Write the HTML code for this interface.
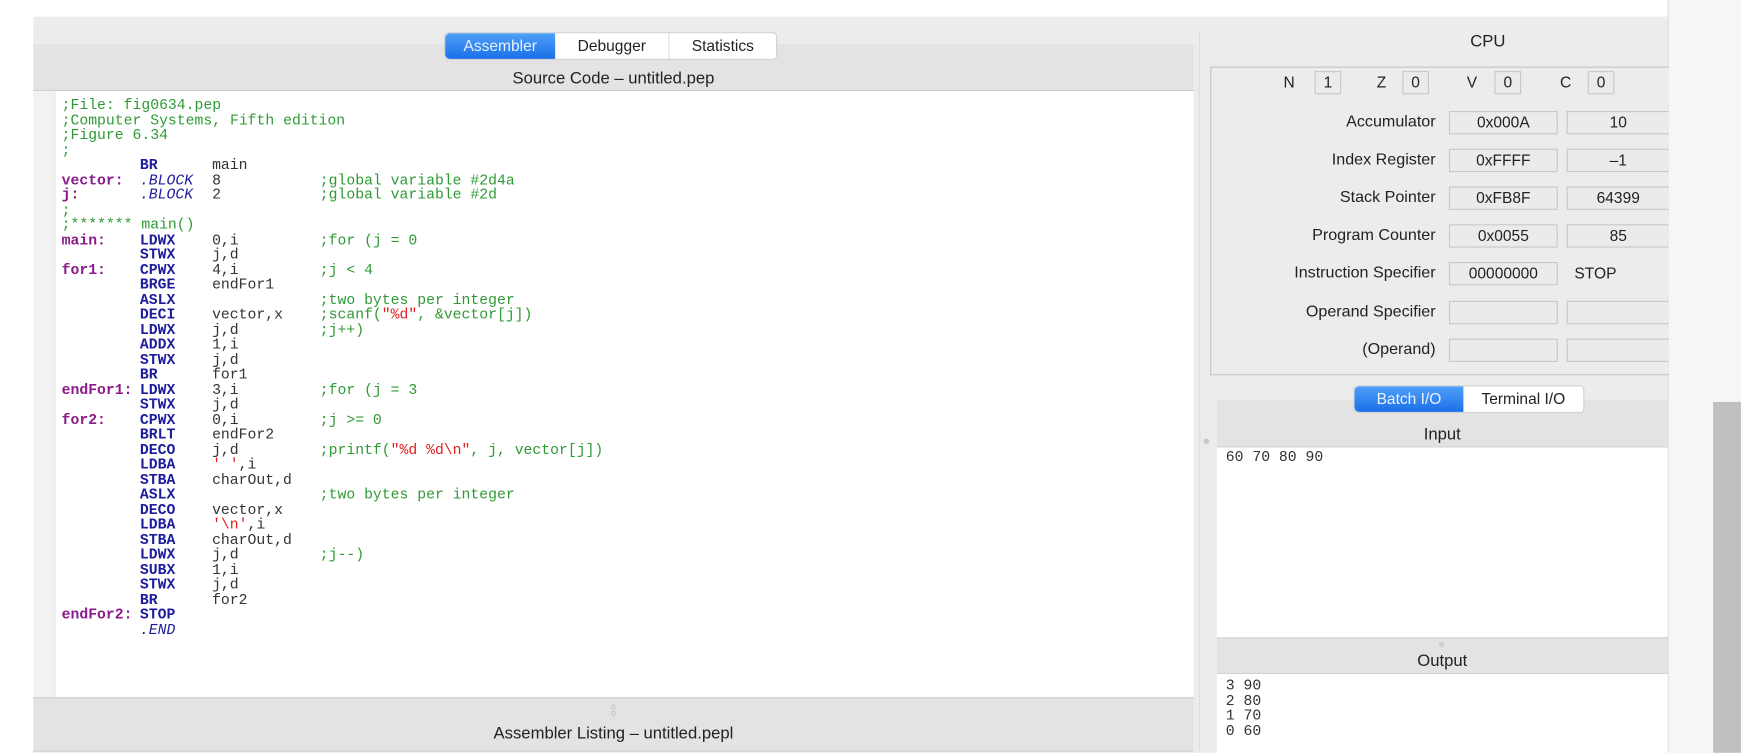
<!DOCTYPE html>
<html><head><style>
body{margin:0;width:1741px;height:752px;overflow:hidden;background:#fff;position:relative;font-family:"Liberation Sans",sans-serif}
#s{position:absolute;left:0;top:0;width:1568px;height:678px;transform:scale(1.1103);transform-origin:0 0}
.a{position:absolute}
.code{font-family:"Liberation Mono",monospace;font-size:13.3px;line-height:13.5px;white-space:pre;position:absolute}
.g{color:#2f9a35}.p{color:#8b1a8b;font-weight:bold}.b{color:#1c1c9c;font-weight:bold}.bi{color:#1c1c9c;font-style:italic}.r{color:#e02020}.k{color:#333}
.box{position:absolute;height:19px;border:1px solid #c8c8c8;background:#ebebeb;font-size:14px;line-height:19px;text-align:center;color:#222}
.lbl{position:absolute;right:0;font-size:14.5px;line-height:21px;color:#222;text-align:right;white-space:nowrap}
</style></head><body><div id="s">
<div class="a" style="left:30px;top:15px;width:1472px;height:663px;background:#ececec"></div>
<div class="a" style="left:1502px;top:0;width:1px;height:678px;background:#d8d8d8"></div>
<div class="a" style="left:1503px;top:0;width:65px;height:678px;background:#f6f6f6"></div>
<div class="a" style="left:1543px;top:362px;width:25px;height:316px;background:#c0c0c0"></div>

<div class="a" style="left:30px;top:40px;width:1045px;height:41px;background:#e3e3e3;border-bottom:1px solid #cfcfcf"></div>
<div class="a" style="left:400px;top:29px;width:298px;height:23px;border-radius:4px;background:#fff;border:1px solid #d0d0d0;font-size:14px;line-height:23px;color:#222">
<span class="a" style="left:0;top:0;width:99px;height:23px;background:linear-gradient(#4fa0f8,#1a6fe8);color:#e8f2ff;text-align:center;border-radius:4px 0 0 4px">Assembler</span>
<span class="a" style="left:99px;width:102px;text-align:center;border-right:1px solid #ddd">Debugger</span>
<span class="a" style="left:202px;width:96px;text-align:center">Statistics</span></div>
<div class="a" style="left:30px;top:62px;width:1045px;text-align:center;font-size:15px;color:#222">Source Code – untitled.pep</div>
<div class="a" style="left:30px;top:82px;width:1045px;height:546px;background:#fff"></div>
<div class="a" style="left:30px;top:82px;width:19px;height:546px;background:#f2f2f2;border-right:1px solid #e6e6e6"></div>
<div class="a" style="left:30px;top:628px;width:1045px;height:47px;background:#e3e3e3;border-top:1px solid #cfcfcf;border-bottom:1px solid #cfcfcf"></div>
<div class="a" style="left:30px;top:634px;width:1045px;text-align:center;font-size:8px;color:#bbb;line-height:6px">o<br>o</div>
<div class="a" style="left:30px;top:652px;width:1045px;text-align:center;font-size:15px;color:#222">Assembler Listing – untitled.pepl</div>

<div class="code" style="left:55.5px;top:88px"><span class="g">;File: fig0634.pep
;Computer Systems, Fifth edition
;Figure 6.34
;</span>

<span class="p">vector:</span>
<span class="p">j:</span>
<span class="g">;
;******* main()</span>
<span class="p">main:</span>

<span class="p">for1:</span>







<span class="p">endFor1:</span>

<span class="p">for2:</span>












<span class="p">endFor2:</span></div>
<div class="code" style="left:126px;top:88px">



<span class="b">BR</span>
<span class="bi">.BLOCK</span>
<span class="bi">.BLOCK</span>


<span class="b">LDWX</span>
<span class="b">STWX</span>
<span class="b">CPWX</span>
<span class="b">BRGE</span>
<span class="b">ASLX</span>
<span class="b">DECI</span>
<span class="b">LDWX</span>
<span class="b">ADDX</span>
<span class="b">STWX</span>
<span class="b">BR</span>
<span class="b">LDWX</span>
<span class="b">STWX</span>
<span class="b">CPWX</span>
<span class="b">BRLT</span>
<span class="b">DECO</span>
<span class="b">LDBA</span>
<span class="b">STBA</span>
<span class="b">ASLX</span>
<span class="b">DECO</span>
<span class="b">LDBA</span>
<span class="b">STBA</span>
<span class="b">LDWX</span>
<span class="b">SUBX</span>
<span class="b">STWX</span>
<span class="b">BR</span>
<span class="b">STOP</span>
<span class="bi">.END</span></div>
<div class="code k" style="left:191px;top:88px">



main
8
2


0,i
j,d
4,i
endFor1

vector,x
j,d
1,i
j,d
for1
3,i
j,d
0,i
endFor2
j,d
<span class="r">' '</span>,i
charOut,d

vector,x
<span class="r">'\n'</span>,i
charOut,d
j,d
1,i
j,d
for2</div>
<div class="code g" style="left:288px;top:88px">




;global variable #2d4a
;global variable #2d


;for (j = 0

;j &lt; 4

;two bytes per integer
;scanf(<span class="r">"%d"</span>, &amp;vector[j])
;j++)



;for (j = 3

;j &gt;= 0

;printf(<span class="r">"%d %d\n"</span>, j, vector[j])


;two bytes per integer



;j--)</div>

<div class="a" style="left:1080px;top:29px;width:1px;height:649px;background:#dcdcdc"></div>
<div class="a" style="left:1090px;top:29px;width:500px;text-align:center;font-size:15px;color:#222">CPU</div>
<div class="a" style="left:1090px;top:60px;width:412px;height:276px;border:1px solid #c4c4c4;border-right:none;background:#ececec"></div>
<div class="a" style="left:1156px;top:64px;font-size:14px;line-height:21px;color:#222">N</div><div class="box" style="left:1184px;top:64px;width:22px;">1</div>
<div class="a" style="left:1240px;top:64px;font-size:14px;line-height:21px;color:#222">Z</div><div class="box" style="left:1263px;top:64px;width:22px;">0</div>
<div class="a" style="left:1321px;top:64px;font-size:14px;line-height:21px;color:#222">V</div><div class="box" style="left:1346px;top:64px;width:22px;">0</div>
<div class="a" style="left:1405px;top:64px;font-size:14px;line-height:21px;color:#222">C</div><div class="box" style="left:1430px;top:64px;width:22px;">0</div>
<div class="a" style="left:1090px;top:0;width:203px;height:340px">
<div class="lbl" style="top:100px">Accumulator</div>
<div class="lbl" style="top:134px">Index Register</div>
<div class="lbl" style="top:168px">Stack Pointer</div>
<div class="lbl" style="top:202px">Program Counter</div>
<div class="lbl" style="top:236px">Instruction Specifier</div>
<div class="lbl" style="top:271px">Operand Specifier</div>
<div class="lbl" style="top:305px">(Operand)</div>
</div>
<div class="box" style="left:1305px;top:100px;width:96px">0x000A</div><div class="box" style="left:1411px;top:100px;width:91px;border-right:none">10</div>
<div class="box" style="left:1305px;top:134px;width:96px">0xFFFF</div><div class="box" style="left:1411px;top:134px;width:91px;border-right:none">–1</div>
<div class="box" style="left:1305px;top:168px;width:96px">0xFB8F</div><div class="box" style="left:1411px;top:168px;width:91px;border-right:none">64399</div>
<div class="box" style="left:1305px;top:202px;width:96px">0x0055</div><div class="box" style="left:1411px;top:202px;width:91px;border-right:none">85</div>
<div class="box" style="left:1305px;top:236px;width:96px">00000000</div><div class="a" style="left:1418px;top:236px;font-size:14px;line-height:21px;color:#222">STOP</div>
<div class="box" style="left:1305px;top:271px;width:96px"></div><div class="box" style="left:1411px;top:271px;width:91px;border-right:none"></div>
<div class="box" style="left:1305px;top:305px;width:96px"></div><div class="box" style="left:1411px;top:305px;width:91px;border-right:none"></div>

<div class="a" style="left:1096px;top:360px;width:406px;height:318px;background:#e3e3e3"></div>
<div class="a" style="left:1219px;top:347px;width:206px;height:23px;border:1px solid #d0d0d0;border-radius:4px;background:#fff;font-size:14px;line-height:23px;color:#222">
<span class="a" style="left:0;top:0;width:98px;height:23px;background:linear-gradient(#4fa0f8,#1a6fe8);color:#e8f2ff;text-align:center;border-radius:4px 0 0 4px">Batch I/O</span>
<span class="a" style="left:98px;width:108px;text-align:center">Terminal I/O</span></div>
<div class="a" style="left:1084px;top:395px;width:5px;height:5px;border-radius:50%;background:#c8c8c8"></div>
<div class="a" style="left:1096px;top:383px;width:406px;text-align:center;font-size:15px;color:#222">Input</div>
<div class="a" style="left:1096px;top:402px;width:406px;height:171px;background:#fff;border-top:1px solid #cfcfcf;border-bottom:1px solid #cfcfcf"></div>
<div class="code k" style="left:1104px;top:405px">60 70 80 90</div>
<div class="a" style="left:1096px;top:587px;width:406px;text-align:center;font-size:15px;color:#222">Output</div>
<div class="a" style="left:1296px;top:578px;width:5px;height:5px;border-radius:50%;background:#d0d0d0"></div>
<div class="a" style="left:1096px;top:606px;width:406px;height:72px;background:#fff;border-top:1px solid #cfcfcf"></div>
<div class="code k" style="left:1104px;top:611px">3 90
2 80
1 70
0 60</div>
</div></body></html>
